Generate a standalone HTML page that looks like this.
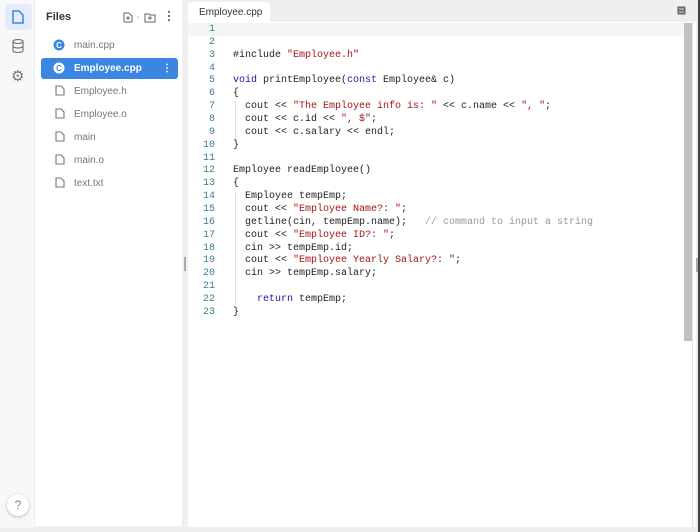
<!DOCTYPE html>
<html><head><style>
*{margin:0;padding:0;box-sizing:border-box}
body{width:700px;height:532px;background:#efefef;font-family:"Liberation Sans",sans-serif;position:relative;overflow:hidden}
.iconbar{position:absolute;left:0;top:0;width:34px;height:528px;background:#f8f8f8}
.files{position:absolute;left:35px;top:0;width:147px;height:526px;background:#fff}
.editor{position:absolute;left:188px;top:0;width:508px;height:527px;background:#fff}
.tabbar{position:absolute;left:0;top:0;width:508px;height:22px;background:#efefef}
.tab{position:absolute;left:0;top:2px;width:82px;height:20px;background:#fff;font-size:10px;color:#333;padding:5px 0 0 11px;border-radius:3px 3px 0 0}
.row{position:absolute;left:6px;width:137px;height:21px;font-size:10px;color:#777;padding-left:33px;line-height:22px}
.row.sel{background:#3b86e0;color:#fff;border-radius:3px}
.code{position:absolute;left:0;top:24px;font-family:"Liberation Mono",monospace;font-size:10px;line-height:12.86px;white-space:pre;color:#222}
.ln{position:absolute;left:0;width:27px;text-align:right;color:#3a7f8f;top:24px;font-family:"Liberation Mono",monospace;font-size:10px;line-height:12.86px;white-space:pre}
.k{color:#1a1aa6}.s{color:#a31515}.c{color:#999}
</style></head><body>
<div class="iconbar">
<div style="position:absolute;left:5px;top:4px;width:27px;height:26px;background:#e4ecfa;border-radius:4px"></div>
<svg style="position:absolute;left:12px;top:10px" width="12" height="14" viewBox="0 0 12 14"><path d="M1 1h6l4 4v8H1z" fill="none" stroke="#3b86e0" stroke-width="1.5"/></svg>
<svg style="position:absolute;left:12px;top:39px" width="12" height="14" viewBox="0 0 12 14"><ellipse cx="6" cy="2.5" rx="5" ry="2" fill="none" stroke="#777" stroke-width="1.2"/><path d="M1 2.5v9c0 1.1 2.2 2 5 2s5-.9 5-2v-9M1 7c0 1.1 2.2 2 5 2s5-.9 5-2" fill="none" stroke="#777" stroke-width="1.2"/></svg>
<div style="position:absolute;left:11px;top:67px;font-size:15px;color:#777">⚙</div>
<div style="position:absolute;left:7px;top:494px;width:22px;height:22px;border-radius:50%;background:#fff;box-shadow:0 1px 3px rgba(0,0,0,.25);text-align:center;font-size:12px;line-height:22px;color:#888">?</div>
</div>
<div class="files">
<div style="position:absolute;left:11px;top:11px;font-size:11px;font-weight:bold;color:#333">Files</div>
<svg style="position:absolute;left:88px;top:12px" width="40" height="11" viewBox="0 0 40 11"><path d="M1 1h5l3 3v6H1z M5 4v4M3 6h4" fill="none" stroke="#666" stroke-width="1"/><path d="M15 4v3" stroke="#ccc"/><path d="M22 2h4l1 1h5v7h-10zM27 4v4M25 6h4" fill="none" stroke="#666" stroke-width="1"/></svg>
<div style="position:absolute;left:133px;top:11px;width:3px;font-size:0"><i style="display:block;width:2px;height:2px;background:#777;margin-bottom:2px"></i><i style="display:block;width:2px;height:2px;background:#777;margin-bottom:2px"></i><i style="display:block;width:2px;height:2px;background:#777"></i></div>
<div class="row" style="top:35px">main.cpp</div>
<div class="row sel" style="top:58px;font-weight:bold;font-size:10px">Employee.cpp<span style="position:absolute;right:6px;top:0">⋮</span></div>
<div class="row" style="top:81px">Employee.h</div>
<div class="row" style="top:104px">Employee.o</div>
<div class="row" style="top:127px">main</div>
<div class="row" style="top:150px">main.o</div>
<div class="row" style="top:173px">text.txt</div>
<svg style="position:absolute;left:18px;top:39px" width="12" height="12"><circle cx="6" cy="6" r="5.5" fill="#3b86e0"/><text x="6" y="9" font-size="8" font-weight="bold" fill="#fff" text-anchor="middle" font-family="Liberation Sans">C</text></svg>
<svg style="position:absolute;left:18px;top:62px" width="12" height="12"><circle cx="6" cy="6" r="5.5" fill="#fff"/><text x="6" y="9" font-size="8" font-weight="bold" fill="#3b86e0" text-anchor="middle" font-family="Liberation Sans">C</text></svg>
<svg style="position:absolute;left:20px;top:85px" width="10" height="105" viewBox="0 0 10 105"><g fill="none" stroke="#777" stroke-width="1.1"><path d="M1 1h5l3 3v6H1z"/><path d="M1 24h5l3 3v6H1z"/><path d="M1 47h5l3 3v6H1z"/><path d="M1 70h5l3 3v6H1z"/><path d="M1 93h5l3 3v6H1z"/></g></svg>
</div>
<div style="position:absolute;left:184px;top:257px;width:2px;height:14px;background:#aaa"></div>
<div class="editor">
<div class="tabbar"><div class="tab">Employee.cpp</div>
<svg style="position:absolute;left:489px;top:6px" width="9" height="9"><rect x=".5" y=".5" width="8" height="8" fill="#666"/><path d="M2 3h5M2 6h5" stroke="#ddd"/></svg></div>
<div style="position:absolute;left:0;top:23px;width:496px;height:13px;background:#f5f5f5"></div>
<div style="position:absolute;left:496px;top:23px;width:8px;height:318px;background:#c1c1c1"></div>
<div style="position:absolute;left:504px;top:22px;width:1px;height:505px;background:#e5e5e5"></div>
<div style="position:absolute;left:47px;top:101px;width:1px;height:38px;background:#ddd"></div>
<div style="position:absolute;left:47px;top:191px;width:1px;height:114px;background:#ddd"></div>
<div class="ln">1
2
3
4
5
6
7
8
9
10
11
12
13
14
15
16
17
18
19
20
21
22
23</div>
<div class="code" style="left:45px">

#include <span class="s">"Employee.h"</span>

<span class="k">void</span> printEmployee(<span class="k">const</span> Employee&amp; c)
{
  cout &lt;&lt; <span class="s">"The Employee info is: "</span> &lt;&lt; c.name &lt;&lt; <span class="s">", "</span>;
  cout &lt;&lt; c.id &lt;&lt; <span class="s">", $"</span>;
  cout &lt;&lt; c.salary &lt;&lt; endl;
}

Employee readEmployee()
{
  Employee tempEmp;
  cout &lt;&lt; <span class="s">"Employee Name?: "</span>;
  getline(cin, tempEmp.name);   <span class="c">// command to input a string</span>
  cout &lt;&lt; <span class="s">"Employee ID?: "</span>;
  cin &gt;&gt; tempEmp.id;
  cout &lt;&lt; <span class="s">"Employee Yearly Salary?: "</span>;
  cin &gt;&gt; tempEmp.salary;

    <span class="k">return</span> tempEmp;
}</div>
</div>
<div style="position:absolute;left:696px;top:258px;width:2px;height:14px;background:#aaa"></div>
<div style="position:absolute;left:698px;top:0;width:2px;height:532px;background:#444"></div>
</body></html>
